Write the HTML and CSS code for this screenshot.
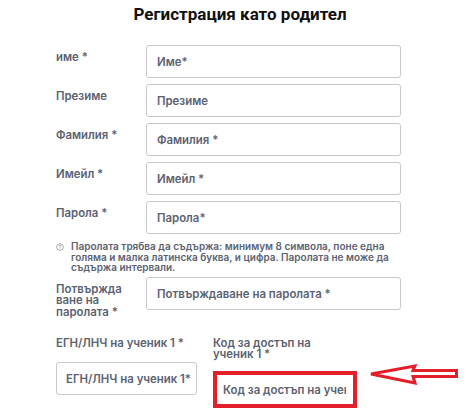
FILE: index.html
```html
<!DOCTYPE html>
<html lang="bg">
<head>
<meta charset="utf-8">
<title>Регистрация като родител</title>
<link rel="stylesheet" href="styles.css">
</head>
<body>
<h1 class="title">Регистрация като родител</h1>
<form class="form">
  <div class="row"><label class="label">име *</label><input class="field" placeholder="Име*"></div>
  <div class="row"><label class="label">Презиме</label><input class="field" placeholder="Презиме"></div>
  <div class="row"><label class="label">Фамилия *</label><input class="field" placeholder="Фамилия *"></div>
  <div class="row"><label class="label">Имейл *</label><input class="field" placeholder="Имейл *"></div>
  <div class="row"><label class="label">Парола *</label><input class="field" placeholder="Парола*"></div>
  <p class="hint">
    <svg class="hint-icon" viewBox="0 0 8 8" width="8" height="8"><circle cx="4" cy="4" r="3.4" fill="none" stroke="#8a8f98" stroke-width="0.7"/><path d="M2.9 3.1 Q2.9 2.1 4 2.1 Q5.1 2.1 5.1 3 Q5.1 3.6 4.4 3.9 Q4 4.1 4 4.7" fill="none" stroke="#8a8f98" stroke-width="0.7"/><circle cx="4" cy="5.8" r="0.4" fill="#8a8f98"/></svg>
    <span class="hint-text">Паролата трябва да съдържа: минимум 8 символа, поне една голяма и малка латинска буква, и цифра. Паролата не може да съдържа интервали.</span>
  </p>
  <div class="row"><label class="label label-wrap">Потвърждаване на паролата *</label><input class="field" placeholder="Потвърждаване на паролата *"></div>
  <div class="pair">
    <div class="col col-left">
      <label class="label pair-label">ЕГН/ЛНЧ на ученик 1 *</label>
      <input class="field field-narrow" placeholder="ЕГН/ЛНЧ на ученик 1*">
    </div>
    <div class="col col-right">
      <label class="label pair-label pair-label-narrow">Код за достъп на ученик 1 *</label>
      <input class="field field-marked" placeholder="Код за достъп на ученик 1*">
    </div>
    <svg class="arrow" viewBox="0 0 92 24" width="92" height="24"><polygon points="2,11 46,3 44,7.5 87.5,7.5 87.5,13.5 44,13.5 46,20" fill="#fff" stroke="#e3202a" stroke-width="3" stroke-linejoin="miter"/></svg>
  </div>
</form>
</body>
</html>
```
FILE: styles.css
```css
* { box-sizing: border-box; }
body {
  margin: 0;
  background: #fff;
  font-family: Inter, "Noto Sans", sans-serif;
  color: #5b6270;
}
.title {
  margin: 0;
  padding-top: 4px;
  height: 25px;
  font-family: Roboto, "Liberation Sans", sans-serif;
  font-weight: 700;
  font-size: 17px;
  line-height: 20px;
  color: #111;
  text-align: center;
  padding-left: 6px;
}
.form {
  width: 345px;
  margin: 20px 0 0 56px;
}
.row {
  display: grid;
  grid-template-columns: 90px 255px;
  align-items: start;
  margin-bottom: 6px;
}
.label {
  font-weight: 600;
  font-size: 11.4px;
  line-height: 11.5px;
  padding-top: 6.8px;
  color: #5b6270;
}
.label-wrap {
  width: 70px;
  overflow-wrap: anywhere;
}
.field {
  display: block;
  width: 100%;
  height: 33px;
  margin: 0;
  padding: 0 8px 0 10px;
  border: 1px solid #c9c9cc;
  border-radius: 3px;
  background: #fff;
  font-family: Inter, "Noto Sans", sans-serif;
  font-weight: 600;
  font-size: 11.4px;
  color: #5b6270;
  outline: none;
}
.field::placeholder {
  color: #5b6270;
  opacity: 1;
}
.hint {
  display: flex;
  gap: 7px;
  margin: 7px 0 4.5px;
  font-weight: 600;
  font-size: 10px;
  line-height: 10.5px;
  color: #5b6270;
}
.hint-icon {
  flex: none;
  margin-top: 1.5px;
}
.hint-text { width: 330px; }
.pair {
  position: relative;
  display: grid;
  grid-template-columns: 141px 144px;
  column-gap: 16px;
  align-items: start;
  margin-top: 19.5px;
}
.pair-label {
  display: block;
  line-height: 11px;
  padding-top: 0;
}
.pair-label-narrow { width: 110px; }
.field-narrow {
  margin-top: 13.5px;
  padding: 0 1px 0 9px;
}
.field-marked {
  margin-top: 11.5px;
  height: 37px;
  border: 4px solid #e3202a;
  border-radius: 0;
  padding: 0 7px 0 6px;
}
.arrow {
  position: absolute;
  left: 313px;
  top: 25.5px;
}
```
